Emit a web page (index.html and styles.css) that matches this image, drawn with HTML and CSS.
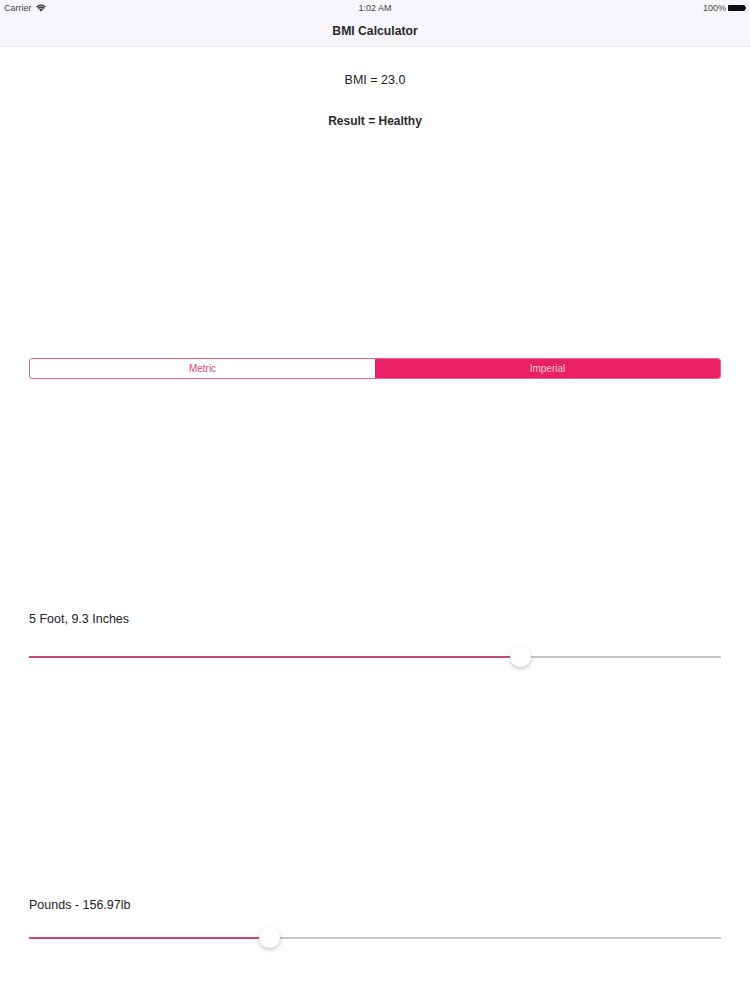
FILE: index.html
```html
<!DOCTYPE html>
<html lang="en">
<head>
    <meta charset="UTF-8">
    <meta name="viewport" content="width=device-width, initial-scale=1.0">
    <title>BMI Calculator</title>
    <link rel="stylesheet" href="styles.css">
</head>
<body>
    <div class="topbar">
        <div class="statusbar">
            <div class="status-left">
                <span>Carrier</span>
                <svg class="wifi" width="10" height="8" viewBox="0 0 10 8">
                    <path d="M5 7.6 L0.2 2.6 C2.9 -0.3 7.1 -0.3 9.8 2.6 Z" fill="#333"/>
                    <path d="M1.6 3.6 C3.5 1.8 6.5 1.8 8.4 3.6" fill="none" stroke="#f7f6fa" stroke-width="0.7"/>
                    <path d="M3 5.1 C4.1 4.1 5.9 4.1 7 5.1" fill="none" stroke="#f7f6fa" stroke-width="0.7"/>
                </svg>
            </div>
            <div class="status-time">1:02 AM</div>
            <div class="status-right">
                <span>100%</span>
                <div class="battery"></div>
                <div class="battery-tip"></div>
            </div>
        </div>
        <div class="navbar">BMI Calculator</div>
    </div>

    <div class="results">
        <p class="bmi">BMI = 23.0</p>
        <p class="result">Result = Healthy</p>
    </div>

    <div class="segments">
        <div class="segment">Metric</div>
        <div class="segment active">Imperial</div>
    </div>

    <div class="control height-control">
        <div class="control-label">5 Foot, 9.3 Inches</div>
        <div class="slider">
            <div class="slider-fill" style="width: 491px"></div>
            <div class="slider-thumb" style="left: 491px"></div>
        </div>
    </div>

    <div class="control weight-control">
        <div class="control-label">Pounds - 156.97lb</div>
        <div class="slider">
            <div class="slider-fill" style="width: 240px"></div>
            <div class="slider-thumb" style="left: 240px"></div>
        </div>
    </div>
</body>
</html>
```

FILE: styles.css
```css
body {
    font-family: "Liberation Sans", Arial, sans-serif;
    background-color: white;
    color: #222;
    margin: 0;
    padding: 0;
}
.topbar {
    background-color: #f7f6fa;
    border-bottom: 1px solid #e8e7ec;
    height: 46px;
}
.statusbar {
    display: flex;
    justify-content: space-between;
    align-items: center;
    height: 15px;
    padding: 0 4px;
    font-size: 9px;
    color: #444;
}
.status-left, .status-right {
    display: flex;
    align-items: center;
    width: 60px;
}
.status-left span {
    margin-right: 4px;
}
.status-time {
    flex: 1;
    text-align: center;
}
.status-right {
    justify-content: flex-end;
}
.battery {
    width: 17px;
    height: 6px;
    background-color: #111;
    border-radius: 1px;
    margin-left: 2px;
}
.battery-tip {
    width: 1px;
    height: 2px;
    background-color: #111;
}
.navbar {
    height: 31px;
    line-height: 32px;
    text-align: center;
    font-size: 12.2px;
    font-weight: bold;
    color: #2a2a2a;
}
.results {
    height: 311px;
    text-align: center;
    font-size: 12.5px;
}
.results p {
    margin: 0;
}
.bmi {
    padding-top: 26px;
    line-height: 15px;
}
.result {
    padding-top: 26px;
    line-height: 15px;
    font-size: 12px;
    font-weight: bold;
    color: #2a2a2a;
}
.segments {
    display: flex;
    height: 21px;
    margin: 0 29px;
    border: 1px solid #e4648f;
    border-radius: 3px;
    box-sizing: border-box;
    font-size: 10px;
    overflow: hidden;
}
.segment {
    flex: 1;
    text-align: center;
    line-height: 19px;
    color: #d9467c;
}
.segment.active {
    background-color: #e92163;
    color: #f8c4d6;
}
.control {
    padding: 0 29px;
}
.height-control {
    margin-top: 233px;
}
.weight-control {
    margin-top: 240px;
    padding-bottom: 60px;
}
.control-label {
    font-size: 12.5px;
    line-height: 15px;
    color: #222;
}
.slider {
    position: relative;
    height: 2px;
    margin-top: 29px;
    background-color: #c6c6c6;
}
.weight-control .slider {
    margin-top: 24px;
}
.slider-fill {
    height: 2px;
    background-color: #c9487a;
}
.slider-thumb {
    position: absolute;
    top: -10px;
    width: 21px;
    height: 21px;
    margin-left: -10px;
    border-radius: 50%;
    background-color: white;
    box-shadow: 0 2px 4px rgba(0, 0, 0, 0.22);
}
```
